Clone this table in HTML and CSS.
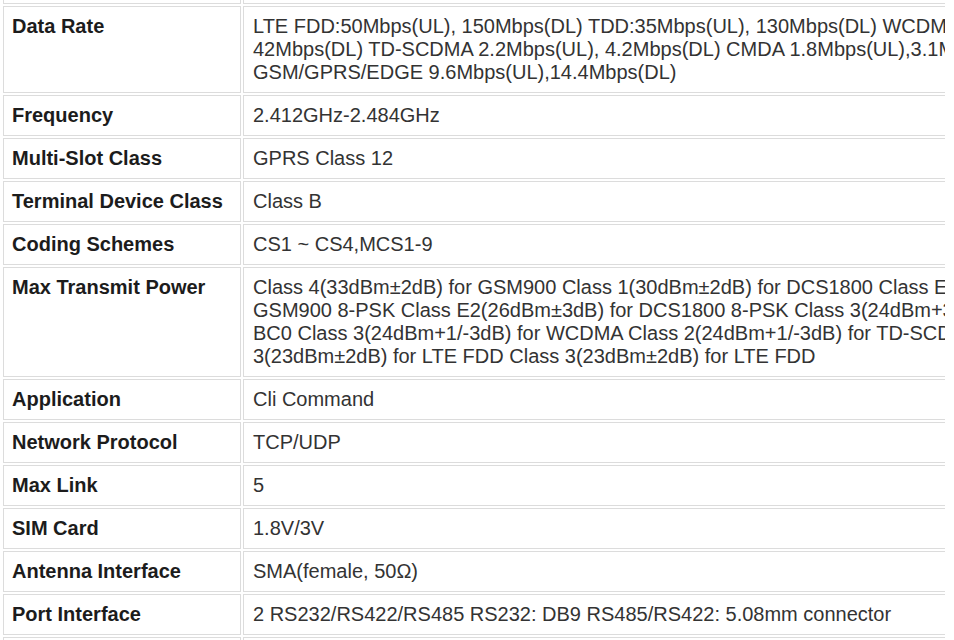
FILE: index.html
```html
<!DOCTYPE html>
<html>
<head>
<meta charset="utf-8">
<link rel="stylesheet" href="styles.css">
</head>
<body>
<div class="wrap">
<table class="spec">
<colgroup><col class="c-label"><col class="c-value"></colgroup>
<tbody>
<tr class="prev"><th>Operating Temperature</th><td>-30°C ~ +75°C</td></tr>
<tr><th>Data Rate</th><td>LTE FDD:50Mbps(UL), 150Mbps(DL) TDD:35Mbps(UL), 130Mbps(DL) WCDMA 5.76Mbps(UL),<br>42Mbps(DL) TD-SCDMA 2.2Mbps(UL), 4.2Mbps(DL) CMDA 1.8Mbps(UL),3.1Mbps(DL)<br>GSM/GPRS/EDGE 9.6Mbps(UL),14.4Mbps(DL)</td></tr>
<tr><th>Frequency</th><td>2.412GHz-2.484GHz</td></tr>
<tr><th>Multi-Slot Class</th><td>GPRS Class 12</td></tr>
<tr><th>Terminal Device Class</th><td>Class B</td></tr>
<tr><th>Coding Schemes</th><td>CS1 ~ CS4,MCS1-9</td></tr>
<tr><th>Max Transmit Power</th><td>Class 4(33dBm±2dB) for GSM900 Class 1(30dBm±2dB) for DCS1800 Class E2(27dBm±3dB) for<br>GSM900 8-PSK Class E2(26dBm±3dB) for DCS1800 8-PSK Class 3(24dBm+3/-1dB) for CDMA<br>BC0 Class 3(24dBm+1/-3dB) for WCDMA Class 2(24dBm+1/-3dB) for TD-SCDMA Class<br>3(23dBm±2dB) for LTE FDD Class 3(23dBm±2dB) for LTE FDD</td></tr>
<tr><th>Application</th><td>Cli Command</td></tr>
<tr><th>Network Protocol</th><td>TCP/UDP</td></tr>
<tr><th>Max Link</th><td>5</td></tr>
<tr><th>SIM Card</th><td>1.8V/3V</td></tr>
<tr><th>Antenna Interface</th><td>SMA(female, 50Ω)</td></tr>
<tr><th>Port Interface</th><td>2 RS232/RS422/RS485 RS232: DB9 RS485/RS422: 5.08mm connector</td></tr>
<tr><th>Power Supply</th><td>DC 12V</td></tr>
</tbody>
</table>
</div>
</body>
</html>
```

FILE: styles.css
```css
html, body {
  margin: 0;
  padding: 0;
  background: #fff;
}
.wrap {
  width: 945px;
  height: 640px;
  overflow: hidden;
}
.spec {
  margin-top: -39px;
  margin-left: 1px;
  border-collapse: separate;
  border-spacing: 2px;
  table-layout: fixed;
  width: 1200px;
  font-family: "Liberation Sans", Arial, sans-serif;
  font-size: 20px;
  line-height: 23px;
}
.c-label { width: 238px; }
.spec th, .spec td {
  border: 1px solid #dcdcdc;
  padding: 8px 9px 8px 8px;
  text-align: left;
  vertical-align: top;
  white-space: nowrap;
  overflow: hidden;
}
.spec th {
  font-weight: bold;
  color: #1c1c1c;
}
.spec td {
  color: #333;
  padding-left: 9px;
}
.spec .prev th, .spec .prev td {
  height: 23px;
}
```
